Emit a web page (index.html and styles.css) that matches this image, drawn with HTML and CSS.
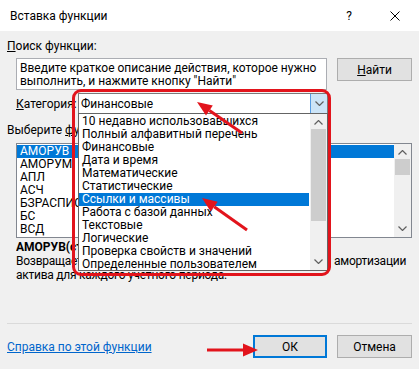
FILE: index.html
```html
<!DOCTYPE html>
<html lang="ru">
<head>
  <meta charset="utf-8" />
  <title>Вставка функции</title>
  <link rel="stylesheet" href="styles.css">
</head>
<body>
  <div class="dialog">
    <div class="titlebar">
      <span class="title">Вставка функции</span>
      <span class="help">?</span>
      <svg class="close" width="10" height="10" viewBox="0 0 10 10"><path d="M0.5 0.5 L9.5 9.5 M9.5 0.5 L0.5 9.5" /></svg>
    </div>

    <div class="body">
      <div class="label label-search"><u>П</u>оиск функции:</div>
      <div class="search-row">
        <div class="search-box">Введите краткое описание действия, которое нужно<br>выполнить, и нажмите кнопку "Найти"</div>
        <button class="btn"><u>Н</u>айти</button>
      </div>

      <div class="category-row">
        <span class="cat-label"><u>К</u>атегория:</span>
        <div class="combo">
          <span class="combo-value">Финансовые</span>
          <span class="combo-btn">
            <svg width="9" height="5" viewBox="0 0 9 5"><polyline points="0.5,0.5 4.5,4.5 8.5,0.5" /></svg>
          </span>
        </div>
      </div>

      <div class="label label-func">Выберите <u>ф</u>ункцию:</div>
      <div class="func-list">
        <ul class="items">
          <li class="selected">АМОРУВ</li>
          <li>АМОРУМ</li>
          <li>АПЛ</li>
          <li>АСЧ</li>
          <li>БЗРАСПИС</li>
          <li>БС</li>
          <li>ВСД</li>
        </ul>
        <div class="scrollbar">
          <svg class="arrow-up" width="9" height="5" viewBox="0 0 9 5"><polyline points="0.5,4.5 4.5,0.5 8.5,4.5" /></svg>
          <div class="track"><div class="thumb thumb-small"></div></div>
          <svg class="arrow-down" width="9" height="5" viewBox="0 0 9 5"><polyline points="0.5,0.5 4.5,4.5 8.5,0.5" /></svg>
        </div>
      </div>

      <div class="signature">АМОРУВ(стоимость;дата_приобр;первый_период)</div>
      <div class="desc">Возвращает величину пропорционально распределенной амортизации<br>актива для каждого учетного периода.</div>

      <div class="separator"></div>

      <div class="footer">
        <a href="#" class="help-link">Справка по этой функции</a>
        <button class="btn btn-default">ОК</button>
        <button class="btn">Отмена</button>
      </div>
    </div>

    <div class="dropdown">
      <ul class="items">
        <li>10 недавно использовавшихся</li>
        <li>Полный алфавитный перечень</li>
        <li>Финансовые</li>
        <li>Дата и время</li>
        <li>Математические</li>
        <li>Статистические</li>
        <li class="selected">Ссылки и массивы</li>
        <li>Работа с базой данных</li>
        <li>Текстовые</li>
        <li>Логические</li>
        <li>Проверка свойств и значений</li>
        <li>Определенные пользователем</li>
      </ul>
      <div class="scrollbar">
        <svg class="arrow-up" width="9" height="5" viewBox="0 0 9 5"><polyline points="0.5,4.5 4.5,0.5 8.5,4.5" /></svg>
        <div class="track"><div class="thumb thumb-big"></div></div>
        <svg class="arrow-down" width="9" height="5" viewBox="0 0 9 5"><polyline points="0.5,0.5 4.5,4.5 8.5,0.5" /></svg>
      </div>
    </div>

    <div class="callout"></div>

    <svg class="arrows" width="419" height="369" viewBox="0 0 419 369">
      <line x1="242" y1="133" x2="209.4" y2="110.5" />
      <polygon points="197,102 212.8,105.6 206,115.4" />
      <line x1="247" y1="230" x2="214.2" y2="206.7" />
      <polygon points="202,198 217.7,201.8 210.7,211.6" />
      <line x1="207" y1="350" x2="244" y2="350" />
      <polygon points="258,350 243,343.5 243,356.5" />
    </svg>
  </div>
</body>
</html>
```

FILE: styles.css
```css
body {
  margin: 0;
  font-family: Roboto, "Noto Sans", sans-serif;
  font-size: 12px;
  color: #000;
}
.dialog {
  position: relative;
  width: 419px;
  height: 369px;
  background: #f0f0f0;
  overflow: hidden;
}
.titlebar {
  height: 31px;
  background: #fff;
  display: flex;
  align-items: center;
  padding-left: 10px;
  box-sizing: border-box;
}
.title {
  flex: 1;
  font-size: 12px;
}
.help {
  margin-right: 38px;
  font-size: 12px;
}
.close {
  margin-right: 19px;
}
.close path {
  stroke: #000;
  stroke-width: 1;
  fill: none;
}
.body {
  padding: 0 7px 0 7px;
}
.label {
  line-height: 16px;
}
.label-search {
  margin-top: 7px;
}
.search-row {
  margin-top: 4px;
  display: flex;
  align-items: flex-start;
  padding-left: 9px;
}
.search-box {
  width: 311px;
  height: 32px;
  box-sizing: border-box;
  background: #fff;
  border: 1px solid #abadb3;
  padding: 3px 0 0 3px;
  line-height: 13px;
  white-space: nowrap;
  overflow: hidden;
}
.btn {
  font-family: inherit;
  font-size: 12px;
  color: #000;
  width: 75px;
  height: 23px;
  background: #e1e1e1;
  border: 1px solid #adadad;
  padding: 0;
  margin-left: auto;
}
.category-row {
  margin-top: 3px;
  display: flex;
  align-items: center;
  padding-left: 9px;
}
.cat-label {
  width: 62px;
}
.combo {
  width: 250px;
  height: 21px;
  box-sizing: border-box;
  background: #fff;
  border: 1px solid #7a7a7a;
  display: flex;
  align-items: center;
}
.combo-value {
  flex: 1;
  padding-left: 2px;
}
.combo-btn {
  width: 17px;
  height: 19px;
  box-sizing: border-box;
  background: #cce4f7;
  border-left: 1px solid #569de5;
  display: flex;
  align-items: center;
  justify-content: center;
}
.combo-btn polyline,
.scrollbar polyline {
  stroke: #606060;
  stroke-width: 1.2;
  fill: none;
}
.label-func {
  margin-top: 8px;
}
.func-list {
  margin: 5px 0 0 9px;
  width: 396px;
  height: 95px;
  box-sizing: border-box;
  background: #fff;
  border: 1px solid #828790;
  display: flex;
}
.items {
  list-style: none;
  margin: 0;
  padding: 1px 0 0 0;
  flex: 1;
  overflow: hidden;
}
.items li {
  height: 13px;
  line-height: 13px;
  padding-left: 3px;
  white-space: nowrap;
}
.items li.selected {
  background: #0078d7;
  color: #fff;
}
.scrollbar {
  width: 17px;
  background: #f0f0f0;
  display: flex;
  flex-direction: column;
  align-items: center;
}
.arrow-up {
  margin: 6px 0 4px;
}
.arrow-down {
  margin: 4px 0 6px;
}
.track {
  flex: 1;
  width: 100%;
  padding: 0 1px;
  box-sizing: border-box;
}
.thumb {
  background: #cdcdcd;
}
.thumb-small {
  height: 16px;
}
.thumb-big {
  height: 92px;
}
.signature {
  margin: 2px 0 0 9px;
  font-weight: bold;
  line-height: 14px;
  white-space: nowrap;
  overflow: hidden;
}
.desc {
  margin-left: 9px;
  line-height: 14px;
  letter-spacing: -0.25px;
  white-space: nowrap;
  overflow: hidden;
}
.separator {
  margin-top: 41px;
  height: 1px;
  background: #dadada;
}
.footer {
  margin-top: 11px;
  display: flex;
  align-items: center;
  gap: 10px;
}
.help-link {
  flex: 1;
  color: #0066cc;
  text-decoration: underline;
}
.btn-default {
  width: 74px;
  border: 2px solid #0078d7;
}
.dropdown {
  position: absolute;
  left: 78px;
  top: 113px;
  width: 250px;
  height: 158px;
  box-sizing: border-box;
  background: #fff;
  border: 1px solid #646464;
  display: flex;
}
.dropdown .items li.selected {
  margin-right: 1px;
}
.callout {
  position: absolute;
  left: 72px;
  top: 89px;
  width: 259px;
  height: 187px;
  box-sizing: border-box;
  border: 3px solid #e2141c;
  border-radius: 9px;
}
.arrows {
  position: absolute;
  left: 0;
  top: 0;
  pointer-events: none;
}
.arrows line {
  stroke: #e2141c;
  stroke-width: 3;
}
.arrows polygon {
  fill: #e2141c;
}
```
